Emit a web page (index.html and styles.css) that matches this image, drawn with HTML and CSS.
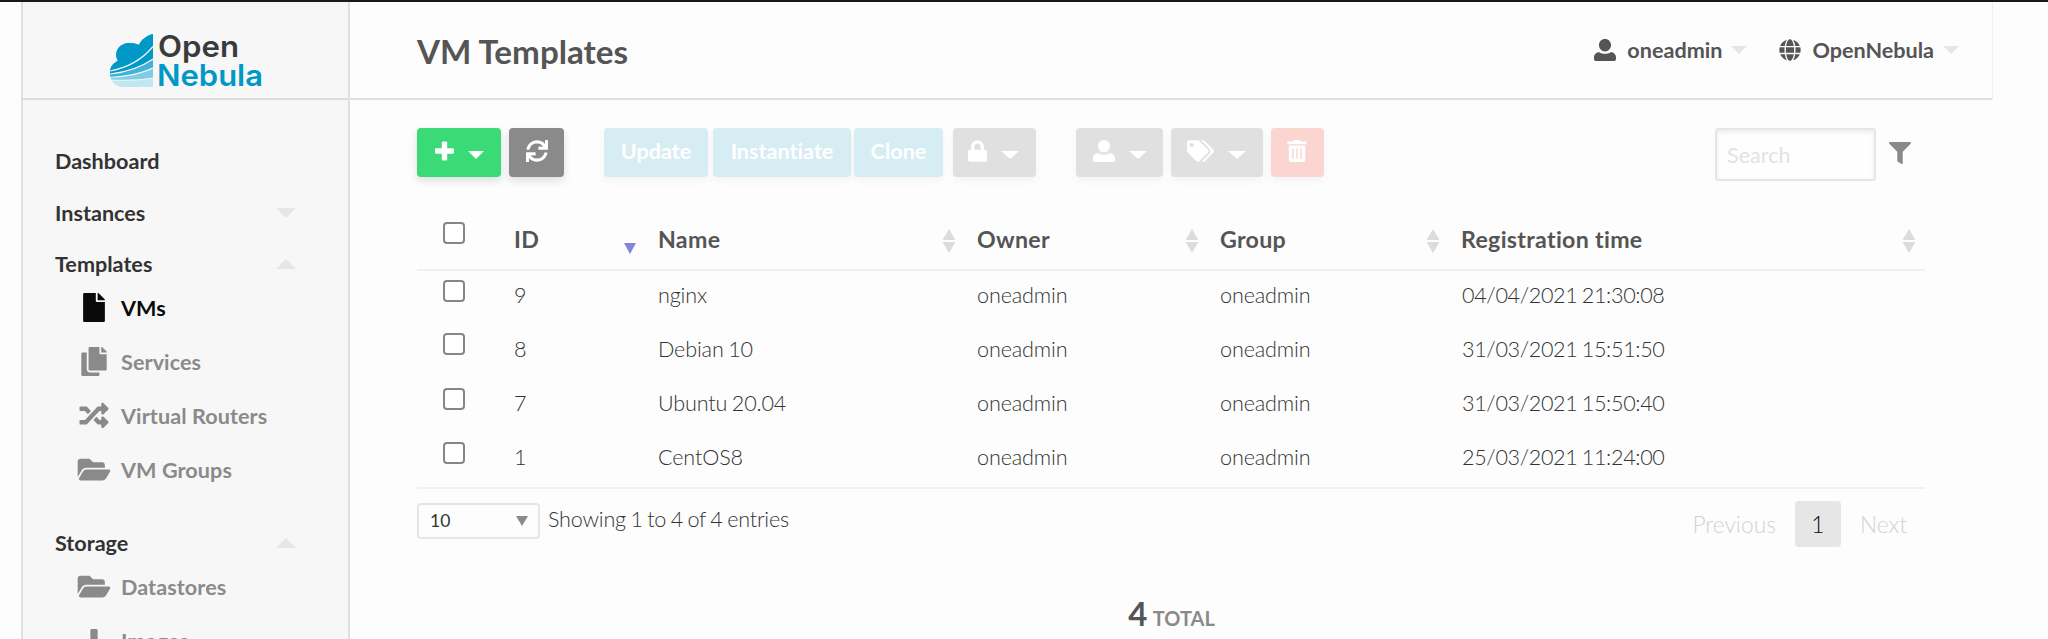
FILE: index.html
```
<!DOCTYPE html>
<html lang="en">
<head>
<meta charset="UTF-8">
<meta name="viewport" content="width=device-width, initial-scale=1.0">
<title>OpenNebula Sunstone: Cloud Operations Center</title>
<link rel="stylesheet" href="styles.css">
</head>
<body>

<!-- Icon set -->
<svg class="icon-defs" width="0" height="0">
    <symbol id="i-file" viewBox="0 0 384 512"><path d="M224 136V0H24C10.700 0 0 10.700 0 24v464c0 13.300 10.700 24 24 24h336c13.300 0 24-10.700 24-24V160H248c-13.200 0-24-10.800-24-24zm160-14.100v6.100H256V0h6.100c6.400 0 12.500 2.500 17 7l97.900 98c4.500 4.500 7 10.600 7 16.900z"/></symbol>
    <symbol id="i-copy" viewBox="0 0 448 512"><path d="M320 448v40c0 13.255-10.745 24-24 24H24c-13.255 0-24-10.745-24-24V120c0-13.255 10.745-24 24-24h72v296c0 30.879 25.121 56 56 56h168zm0-344V0H152c-13.255 0-24 10.745-24 24v368c0 13.255 10.745 24 24 24h272c13.255 0 24-10.745 24-24V128H344c-13.200 0-24-10.800-24-24zm120.971-31.029L375.029 7.029A24 24 0 0 0 358.059 0H352v96h96v-6.059a24 24 0 0 0-7.029-16.970z"/></symbol>
    <symbol id="i-random" viewBox="0 0 512 512"><path d="M504.971 359.029c9.373 9.373 9.373 24.569 0 33.941l-80 79.984c-15.010 15.010-40.971 4.490-40.971-16.971V416h-58.785a12.004 12.004 0 0 1-8.773-3.812l-70.556-75.596 53.333-57.143L352 336h32v-39.981c0-21.438 25.943-31.998 40.971-16.971l80 79.981zM12 176h84l52.781 56.551 53.333-57.143-70.556-75.596A11.999 11.999 0 0 0 122.785 96H12c-6.627 0-12 5.373-12 12v56c0 6.627 5.373 12 12 12zm372 0v39.984c0 21.460 25.961 31.980 40.971 16.971l80-79.984c9.373-9.373 9.373-24.569 0-33.941l-80-79.981C409.943 24.021 384 34.582 384 56.019V96h-58.785a12.004 12.004 0 0 0-8.773 3.812L96 336H12c-6.627 0-12 5.373-12 12v56c0 6.627 5.373 12 12 12h110.785c3.326 0 6.503-1.381 8.773-3.812L352 176h32z"/></symbol>
    <symbol id="i-folder" viewBox="0 0 576 512"><path d="M572.694 292.093L500.270 416.248A63.997 63.997 0 0 1 444.989 448H45.025c-18.523 0-30.064-20.093-20.731-36.093l72.424-124.155A64 64 0 0 1 152 256h399.964c18.523 0 30.064 20.093 20.730 36.093zM152 224h328v-48c0-26.510-21.490-48-48-48H272l-64-64H48C21.490 64 0 85.490 0 112v278.046l69.077-118.418C86.214 242.250 117.989 224 152 224z"/></symbol>
    <symbol id="i-download" viewBox="0 0 512 512"><path d="M216 0h80c13.300 0 24 10.700 24 24v168h87.700c17.800 0 26.700 21.500 14.100 34.100L269.700 378.300c-7.500 7.500-19.800 7.500-27.300 0L90.100 226.100c-12.600-12.600-3.700-34.100 14.100-34.100H192V24c0-13.300 10.700-24 24-24z"/></symbol>
    <symbol id="i-user" viewBox="0 0 512 512"><path d="M256 0c82 0 140 62 140 142s-60 150-140 150S116 222 116 142 174 0 256 0zM126 310c34 26 80 36 130 36s96-10 130-36c74 0 126 48 126 122v32c0 26-22 48-48 48H48c-26 0-48-22-48-48v-32c0-74 52-122 126-122z"/></symbol>
    <symbol id="i-globe" viewBox="0 0 496 512"><path d="M336.500 160C322 70.700 287.800 8 248 8s-74 62.700-88.500 152h177zM152 256c0 22.200 1.200 43.500 3.300 64h185.300c2.100-20.500 3.300-41.800 3.300-64s-1.200-43.500-3.300-64H155.300c-2.100 20.500-3.300 41.800-3.300 64zm324.700-96c-28.600-67.900-86.500-120.400-158-141.600 24.400 33.800 41.200 84.700 50 141.600h108zM177.200 18.400C105.800 39.600 47.800 92.100 19.300 160h108c8.700-56.900 25.500-107.800 49.900-141.600zM487.400 192H372.700c2.100 21 3.300 42.500 3.300 64s-1.200 43-3.300 64h114.600c5.500-20.500 8.600-41.800 8.600-64s-3.100-43.500-8.500-64zM120 256c0-21.500 1.200-43 3.300-64H8.600C3.200 212.500 0 233.800 0 256s3.200 43.500 8.600 64h114.600c-2-21-3.200-42.500-3.200-64zm39.500 96c14.500 89.300 48.700 152 88.500 152s74-62.700 88.500-152h-177zm159.300 141.600c71.400-21.200 129.400-73.700 158-141.600h-108c-8.800 56.900-25.600 107.800-50 141.600zM19.300 352c28.600 67.900 86.500 120.400 158 141.600-24.400-33.800-41.200-84.700-50-141.600h-108z"/></symbol>
    <symbol id="i-plus" viewBox="0 0 448 512"><path d="M416 192H288V64c0-18-14-32-32-32h-64c-18 0-32 14-32 32v128H32c-18 0-32 14-32 32v64c0 18 14 32 32 32h128v128c0 18 14 32 32 32h64c18 0 32-14 32-32V320h128c18 0 32-14 32-32v-64c0-18-14-32-32-32z"/></symbol>
    <symbol id="i-sync" viewBox="0 0 512 512"><path d="M440.650 12.570l4 82.770A247.160 247.160 0 0 0 255.830 8C134.730 8 33.910 94.920 12.290 209.820A12 12 0 0 0 24.090 224h49.050a12 12 0 0 0 11.670-9.260 175.910 175.910 0 0 1 317-56.940l-101.460-4.860a12 12 0 0 0-12.570 12v47.410a12 12 0 0 0 12 12H500a12 12 0 0 0 12-12V12a12 12 0 0 0-12-12h-47.370a12 12 0 0 0-11.980 12.570zM255.830 432a175.610 175.610 0 0 1-146-77.800l101.800 4.870a12 12 0 0 0 12.570-12v-47.400a12 12 0 0 0-12-12H12a12 12 0 0 0-12 12V500a12 12 0 0 0 12 12h47.350a12 12 0 0 0 12-12.600l-4.150-82.570A247.170 247.170 0 0 0 255.830 504c121.110 0 221.930-86.920 243.550-201.820a12 12 0 0 0-11.800-14.180h-49.050a12 12 0 0 0-11.670 9.260A175.860 175.860 0 0 1 255.830 432z"/></symbol>
    <symbol id="i-lock" viewBox="0 0 448 512"><path d="M400 224h-24v-72C376 68.200 307.800 0 224 0S72 68.200 72 152v72H48c-26.500 0-48 21.500-48 48v192c0 26.500 21.500 48 48 48h352c26.500 0 48-21.500 48-48V272c0-26.500-21.500-48-48-48zm-104 0H152v-72c0-39.700 32.300-72 72-72s72 32.300 72 72v72z"/></symbol>
    <symbol id="i-tags" viewBox="0 0 640 512"><path d="M497.941 225.941L286.059 14.059A48 48 0 0 0 252.118 0H48C21.490 0 0 21.490 0 48v204.118a48 48 0 0 0 14.059 33.941l211.882 211.882c18.744 18.745 49.136 18.746 67.882 0l204.118-204.118c18.745-18.745 18.745-49.137 0-67.882zM112 160c-26.510 0-48-21.490-48-48s21.490-48 48-48 48 21.490 48 48-21.490 48-48 48zm513.941 133.823L421.823 497.941c-18.745 18.745-49.137 18.745-67.882 0l-.360-.360L527.640 323.522c16.999-16.999 26.360-39.600 26.360-63.640s-9.362-46.641-26.360-63.640L331.397 0h48.721a48 48 0 0 1 33.941 14.059l211.882 211.882c18.745 18.745 18.745 49.137 0 67.882z"/></symbol>
    <symbol id="i-trash" viewBox="0 0 448 512"><path d="M32 464a48 48 0 0 0 48 48h288a48 48 0 0 0 48-48V128H32zm272-256a16 16 0 0 1 32 0v224a16 16 0 0 1-32 0zm-96 0a16 16 0 0 1 32 0v224a16 16 0 0 1-32 0zm-96 0a16 16 0 0 1 32 0v224a16 16 0 0 1-32 0zM432 32H312l-9.400-18.700A24 24 0 0 0 281.100 0H166.800a23.720 23.720 0 0 0-21.400 13.300L136 32H16A16 16 0 0 0 0 48v32a16 16 0 0 0 16 16h416a16 16 0 0 0 16-16V48a16 16 0 0 0-16-16z"/></symbol>
    <symbol id="i-filter" viewBox="0 0 512 512"><path d="M487.976 0H24.028C2.710 0-8.047 25.866 7.058 40.971L192 225.941V432c0 7.831 3.821 15.170 10.237 19.662l80 55.980C298.020 518.690 320 507.493 320 487.980V225.941l184.947-184.970C520.021 25.896 509.338 0 487.976 0z"/></symbol>
    <symbol id="i-sort" viewBox="0 0 14 26"><path d="M7 1l6.500 11H.5zM.5 14h13L7 25z"/></symbol>
</svg>

<div class="app">
    <aside class="sidebar">
        <div class="logo">
            <svg width="156" height="62" viewBox="0 -4 156 62">
                <defs>
                    <clipPath id="cloud">
                        <path d="M43 1v53H13C5 54 0 47 0 40c0-6 3-10 8-12C3 18 10 10 20 10c3 0 6 .7 9 2C31 7 36 3 43 1z"/>
                    </clipPath>
                </defs>
                <g clip-path="url(#cloud)">
                    <rect width="43" height="56" fill="#c0e6f2"/>
                    <path d="M0 47Q26 48 43 45V0H0z" fill="#7fcce4"/>
                    <path d="M0 44.500Q26 43 43 35V0H0z" fill="#40b3d9"/>
                    <path d="M0 41Q26 38 43 26V0H0z" fill="#0098c6"/>
                    <path d="M0 47Q26 48 43 45M0 44.500Q26 43 43 35M0 41Q26 38 43 26M0 38Q27 33 43 13.500" fill="none" stroke="#f7f7f7" stroke-width="1.200"/>
                </g>
                <text class="logo-open" x="48" y="24" textLength="81" lengthAdjust="spacingAndGlyphs">Open</text>
                <text class="logo-nebula" x="47" y="53" textLength="106" lengthAdjust="spacingAndGlyphs">Nebula</text>
            </svg>
        </div>
        <nav class="menu">
            <div class="menu-title">Dashboard</div>
            <div class="menu-title">Instances <span class="caret"></span></div>
            <div class="menu-title">Templates <span class="caret up"></span></div>
            <div class="submenu">
                <div class="menu-item active"><svg class="icon"><use href="#i-file"/></svg>VMs</div>
                <div class="menu-item"><svg class="icon"><use href="#i-copy"/></svg>Services</div>
                <div class="menu-item"><svg class="icon"><use href="#i-random"/></svg>Virtual Routers</div>
                <div class="menu-item"><svg class="icon"><use href="#i-folder"/></svg>VM Groups</div>
            </div>
            <div class="menu-title">Storage <span class="caret up"></span></div>
            <div class="submenu">
                <div class="menu-item"><svg class="icon"><use href="#i-folder"/></svg>Datastores</div>
                <div class="menu-item"><svg class="icon download"><use href="#i-download"/></svg>Images</div>
            </div>
        </nav>
    </aside>

    <main class="main">
        <header class="header">
            <h1>VM Templates</h1>
            <div class="header-link user"><svg class="icon"><use href="#i-user"/></svg>oneadmin<span class="caret"></span></div>
            <div class="header-link zone"><svg class="icon"><use href="#i-globe"/></svg>OpenNebula<span class="caret"></span></div>
        </header>

        <div class="content">
            <div class="toolbar">
                <button class="btn create"><svg class="icon"><use href="#i-plus"/></svg><span class="caret"></span></button>
                <button class="btn refresh"><svg class="icon"><use href="#i-sync"/></svg></button>
                <button class="btn action update" disabled>Update</button>
                <button class="btn action instantiate" disabled>Instantiate</button>
                <button class="btn action clone" disabled>Clone</button>
                <button class="btn more lock" disabled><svg class="icon"><use href="#i-lock"/></svg><span class="caret"></span></button>
                <button class="btn more owner" disabled><svg class="icon"><use href="#i-user"/></svg><span class="caret"></span></button>
                <button class="btn more tags" disabled><svg class="icon"><use href="#i-tags"/></svg><span class="caret"></span></button>
                <button class="btn delete" disabled><svg class="icon"><use href="#i-trash"/></svg></button>
                <input class="search" type="text" placeholder="Search">
                <svg class="icon filter"><use href="#i-filter"/></svg>
            </div>

            <table class="templates">
                <colgroup>
                    <col class="col-check"><col class="col-id"><col class="col-name"><col class="col-owner"><col class="col-group"><col>
                </colgroup>
                <thead>
                    <tr>
                        <th><span class="check"></span></th>
                        <th><div class="th">ID <span class="sorted"></span></div></th>
                        <th><div class="th">Name <svg class="sort"><use href="#i-sort"/></svg></div></th>
                        <th><div class="th">Owner <svg class="sort"><use href="#i-sort"/></svg></div></th>
                        <th><div class="th">Group <svg class="sort"><use href="#i-sort"/></svg></div></th>
                        <th><div class="th">Registration time <svg class="sort"><use href="#i-sort"/></svg></div></th>
                    </tr>
                </thead>
                <tbody>
                    <tr><td><span class="check"></span></td><td>9</td><td>nginx</td><td>oneadmin</td><td>oneadmin</td><td>04/04/2021 21:30:08</td></tr>
                    <tr><td><span class="check"></span></td><td>8</td><td>Debian 10</td><td>oneadmin</td><td>oneadmin</td><td>31/03/2021 15:51:50</td></tr>
                    <tr><td><span class="check"></span></td><td>7</td><td>Ubuntu 20.04</td><td>oneadmin</td><td>oneadmin</td><td>31/03/2021 15:50:40</td></tr>
                    <tr><td><span class="check"></span></td><td>1</td><td>CentOS8</td><td>oneadmin</td><td>oneadmin</td><td>25/03/2021 11:24:00</td></tr>
                </tbody>
            </table>

            <div class="table-footer">
                <div class="page-size">10 <span class="arrow"></span></div>
                <div class="info">Showing 1 to 4 of 4 entries</div>
                <div class="pagination">
                    <span class="page">Previous</span>
                    <span class="page current">1</span>
                    <span class="page">Next</span>
                </div>
            </div>

            <div class="total"><span class="count">4</span> <span class="label">TOTAL</span></div>
        </div>
    </main>
</div>

</body>
</html>
```
FILE: styles.css
```
* {
    box-sizing: border-box;
}
body {
    font-family: Lato, sans-serif;
    font-size: 21.6px;
    font-variant-ligatures: none;
    background-color: #fdfdfd;
    color: #333;
    margin: 0;
    height: 639px;
    overflow: hidden;
    border-top: 2px solid #1a1a1a;
}
.icon-defs {
    position: absolute;
}
.icon {
    fill: currentColor;
    flex: none;
}
.app {
    display: flex;
    height: 637px;
    margin-left: 21px;
}
.caret {
    flex: none;
    border: 8px solid transparent;
    border-top-color: #e6e6e6;
    border-bottom: 0;
}
.caret.up {
    border-top: 0;
    border-bottom: 10px solid #e6e6e6;
}

/* Sidebar */
.sidebar {
    flex: none;
    width: 329px;
    background-color: #f7f7f7;
    border-left: 2px solid #e0e0e0;
    border-right: 2px solid #e0e0e0;
    overflow: hidden;
}
.logo {
    height: 98px;
    padding: 27px 0 0 87px;
    border-bottom: 2px solid #dcdcdc;
}
.logo svg {
    overflow: visible;
}
.logo-open,
.logo-nebula {
    font-family: Inter, sans-serif;
    font-size: 29.5px;
    font-weight: 600;
    fill: #3a3a3a;
}
.logo-nebula {
    fill: #0098c6;
}
.menu {
    padding: 45px 52px 0 32px;
}
.menu-title {
    display: flex;
    justify-content: space-between;
    align-items: center;
    height: 32px;
    margin-bottom: 19.5px;
    font-weight: 700;
    color: #333;
}
.menu-title .caret {
    border-left-width: 10px;
    border-right-width: 10px;
    border-top-width: 10px;
}
.menu-title .caret.up {
    border-top-width: 0;
}
.submenu {
    margin: -19px 0 30.5px;
}
.menu-item {
    display: flex;
    align-items: center;
    height: 54px;
    padding-left: 22px;
    font-weight: 700;
    letter-spacing: 0.08px;
    color: #8a8a8a;
    white-space: nowrap;
}
.menu-item .icon {
    width: 34px;
    height: 29px;
    margin-right: 10px;
}
.menu-item .icon.download {
    margin-top: 5px;
}
.menu-item.active {
    color: #0a0a0a;
}

/* Header */
.main {
    flex: 1;
}
.header {
    display: flex;
    align-items: center;
    width: 1643px;
    height: 98px;
    padding: 0 33px 0 67px;
    border-bottom: 2px solid #e0e0e0;
    border-right: 1px solid #f0f0f0;
    color: #555;
}
.header h1 {
    flex: 1;
    margin: 1px 0 0;
    font-size: 33.2px;
    font-weight: 700;
}
.header-link {
    display: flex;
    align-items: center;
    font-weight: 700;
}
.header-link .icon {
    width: 22px;
    height: 22px;
    margin-right: 11px;
}
.header-link .caret {
    margin-left: 9px;
}
.header-link.zone {
    margin-left: 32px;
}

/* Toolbar */
.content {
    width: 1576px;
    padding: 28px 0 0 67px;
}
.toolbar {
    display: flex;
    height: 53px;
}
.btn {
    display: flex;
    flex: none;
    align-items: center;
    justify-content: center;
    height: 49px;
    padding: 0 0 4px;
    border: 0;
    border-radius: 4px;
    box-shadow: 0 4px 8px rgba(0, 0, 0, 0.12);
    font-family: inherit;
    font-size: 21.6px;
    font-weight: 700;
    font-variant-ligatures: none;
    color: #fff;
}
.btn:disabled {
    box-shadow: 0 4px 8px rgba(0, 0, 0, 0.04);
}
.btn .icon {
    width: 22px;
    height: 22px;
}
.btn .caret {
    margin: 9px 0 0 14px;
    border-top-color: #fff;
}
.btn.create {
    width: 84px;
    margin-right: 8px;
    background-color: #3adb76;
}
.btn.create .icon,
.btn.lock .icon {
    width: 19px;
}
.btn.refresh {
    width: 55px;
    margin-right: 40px;
    background-color: #8a8a8a;
}
.btn.action {
    background-color: #d7edf4;
}
.btn.update {
    width: 104px;
    margin-right: 5px;
}
.btn.instantiate {
    width: 138px;
    margin-right: 3px;
}
.btn.clone {
    width: 89px;
    margin-right: 10px;
}
.btn.more {
    background-color: #e0e0e0;
}
.btn.more .caret {
    border-left-width: 9px;
    border-right-width: 9px;
}
.btn.lock {
    width: 83px;
    margin-right: 40px;
    padding-right: 2px;
}
.btn.owner {
    width: 87px;
    margin-right: 8px;
}
.btn.tags {
    width: 92px;
    margin-right: 8px;
    padding-right: 2px;
}
.btn.tags .icon {
    width: 27px;
}
.btn.delete {
    width: 53px;
    padding-right: 2px;
    background-color: #fbd5d0;
}
.search {
    width: 161px;
    height: 53px;
    margin-left: auto;
    padding: 0 10px;
    border: 2px solid #e6e6e6;
    border-radius: 3px;
    box-shadow: inset 0 2px 4px rgba(0, 0, 0, 0.08);
    background-color: #fefefe;
    font-family: inherit;
    font-size: 21.6px;
}
.search::placeholder {
    color: #e3e3e3;
}
.icon.filter {
    width: 22px;
    height: 22px;
    margin: 14px 15px 0 13px;
    color: #8a8a8a;
}

/* Templates table */
.templates {
    width: 1508px;
    margin-top: 27px;
    table-layout: fixed;
    border-collapse: collapse;
    border-bottom: 2px solid #f1f1f1;
}
.templates thead {
    border-bottom: 2px solid #f1f1f1;
}
.col-check {
    width: 85px;
}
.col-id {
    width: 144px;
}
.col-name {
    width: 319px;
}
.col-owner {
    width: 243px;
}
.col-group {
    width: 241px;
}
.templates th {
    height: 62px;
    padding: 0 0 0 12px;
    text-align: left;
    font-size: 23.2px;
    font-weight: 700;
    letter-spacing: 0.3px;
    color: #555;
}
.templates td {
    height: 54.400px;
    padding: 0 0 5px 12px;
    font-weight: 300;
    letter-spacing: -0.15px;
    word-spacing: -1.2px;
    color: #333;
}
.templates td:last-child {
    padding-left: 13px;
    letter-spacing: -0.35px;
}
.templates th:first-child,
.templates td:first-child {
    padding: 9px 0 0 26px;
    vertical-align: top;
}
.templates th:first-child {
    padding-top: 14px;
}
.th {
    display: flex;
    align-items: center;
    justify-content: space-between;
    padding-right: 9px;
}
.sort {
    width: 14px;
    height: 26px;
    margin-top: 5px;
    fill: #dcdcdc;
}
.sorted {
    margin: 19px 1px 0 0;
    border: 6.500px solid transparent;
    border-top: 11px solid #8084e0;
    border-bottom: 0;
}
.check {
    display: block;
    width: 22px;
    height: 22px;
    border: 2px solid #868686;
    border-radius: 4px;
    background-color: #fff;
}

/* Table footer */
.table-footer {
    display: flex;
    align-items: flex-start;
    margin-top: 13px;
    padding-right: 19px;
    font-weight: 300;
}
.page-size {
    display: flex;
    align-items: center;
    justify-content: space-between;
    width: 123px;
    height: 36px;
    margin-top: 1px;
    padding: 0 10px 0 11px;
    border: 2px solid #e6e6e6;
    border-radius: 4px;
    font-size: 17.5px;
    font-weight: 400;
}
.page-size .arrow {
    border: 6.500px solid transparent;
    border-top: 10px solid #8a8a8a;
    border-bottom: 0;
}
.info {
    margin: 4px 0 0 8px;
    letter-spacing: -0.2px;
    word-spacing: -1.2px;
}
.pagination {
    display: flex;
    margin: -1px 0 0 auto;
    font-size: 22.8px;
    line-height: 46px;
}
.page {
    color: #d2d2d2;
}
.page.current {
    width: 46px;
    margin: 0 19px 0 19px;
    border-radius: 4px;
    background-color: #e6e6e6;
    color: #0a0a0a;
    text-align: center;
}
.total {
    margin-top: 46px;
    text-align: center;
}
.total .count {
    font-size: 33px;
    font-weight: 700;
    color: #555;
}
.total .label {
    font-weight: 700;
    font-size: 20px;
    color: #8a8a8a;
}
```
